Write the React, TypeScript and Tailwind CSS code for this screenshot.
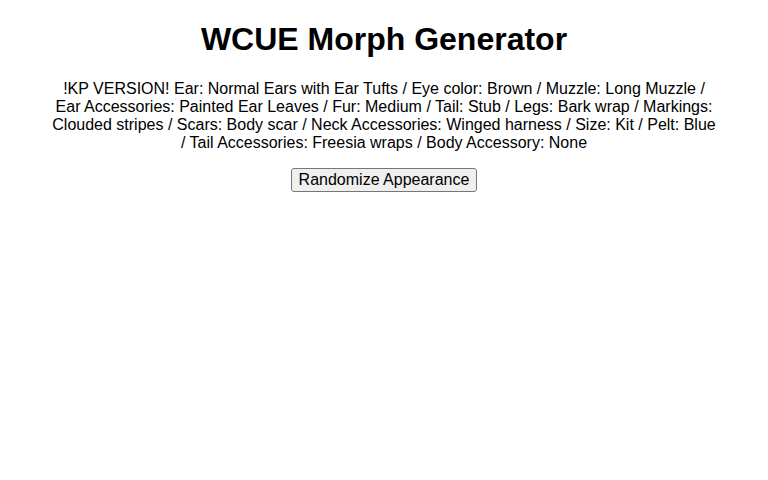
export default function App() {
  const traits =
    "!KP VERSION! Ear: Normal Ears with Ear Tufts / Eye color: Brown / Muzzle: Long Muzzle / Ear Accessories: Painted Ear Leaves / Fur: Medium / Tail: Stub / Legs: Bark wrap / Markings: Clouded stripes / Scars: Body scar / Neck Accessories: Winged harness / Size: Kit / Pelt: Blue / Tail Accessories: Freesia wraps / Body Accessory: None";

  return (
    <div className="min-h-screen bg-white px-[50px] text-center text-black font-['Liberation_Sans',Arial,sans-serif] flow-root">
      <h1 className="mt-[21px] mb-[22px] text-[32px] font-bold leading-[37px]">WCUE Morph Generator</h1>
      <p className="mb-4 text-base leading-[18px]">{traits}</p>
      <button
        type="button"
        className="rounded-[3px] border border-[#767676] bg-[#efefef] px-[7px] py-[2px] text-base leading-[18px] text-black hover:bg-[#e5e5e5]"
      >
        Randomize Appearance
      </button>
    </div>
  );
}
